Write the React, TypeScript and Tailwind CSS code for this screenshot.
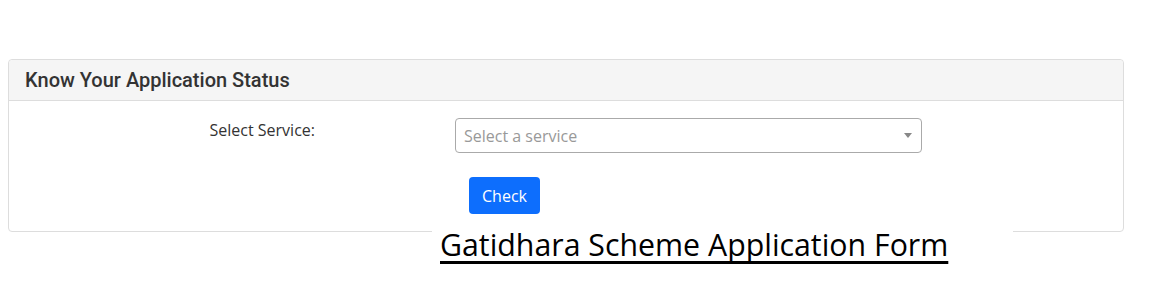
export default function App() {
  return (
    <div className="w-[1166px] h-[281px] bg-white pt-[59px] font-['Open_Sans',sans-serif]">
      <div className="ml-[8px] w-[1116px] rounded-[4px] border border-[#dddddd]">
        <div className="h-[41px] flex items-center px-[16px] bg-[#f5f5f5] border-b border-[#dddddd] rounded-t-[4px]">
          <h3 className="font-['Roboto',sans-serif] font-medium text-[20px] text-[#333333]">
            Know Your Application Status
          </h3>
        </div>
        <div className="pt-[17px] pb-[17px]">
          <div className="flex">
            <div className="w-[446px] flex justify-end pr-[140px]">
              <label className="text-[16px] text-[#333333] leading-[24px]">Select Service:</label>
            </div>
            <div className="w-[467px] h-[35px] border border-[#aaaaaa] rounded-[4px] flex items-center justify-between pl-[8px] pr-[9px]">
              <span className="text-[16px] text-[#999999]">Select a service</span>
              <span className="w-0 h-0 border-l-[4px] border-r-[4px] border-t-[5px] border-l-transparent border-r-transparent border-t-[#888888]" />
            </div>
          </div>
          <div className="mt-[24px] pl-[460px]">
            <button className="h-[37px] w-[71px] rounded-[4px] bg-[#0d6efd] text-white text-[16px]">
              Check
            </button>
          </div>
        </div>
      </div>
      <div className="relative -mt-[1px] ml-[432px] w-[581px] h-[40px] bg-white pl-[8px]">
        <span className="font-['Open_Sans',sans-serif] text-[30.3px] leading-[36px] text-black underline decoration-[3px] underline-offset-[5px] [text-decoration-skip-ink:none] relative -top-[4px]">
          Gatidhara Scheme Application Form
        </span>
      </div>
    </div>
  );
}
